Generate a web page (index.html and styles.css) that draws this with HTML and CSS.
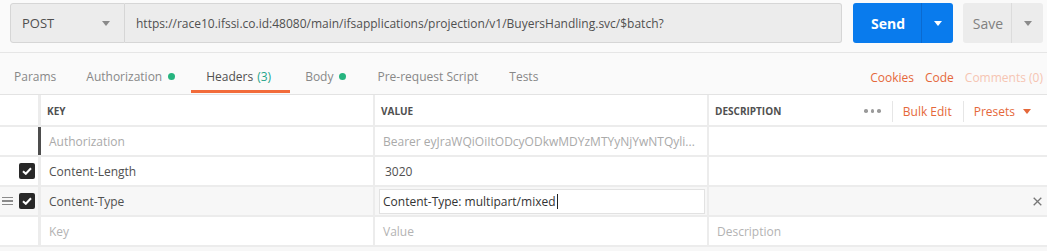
FILE: index.html
```html
<!DOCTYPE html>
<html>
<head>
<meta charset="utf-8">
<link rel="stylesheet" href="styles.css">
</head>
<body>
<div class="app">
  <div class="topbar">
    <div class="method"><span class="method-name">POST</span><span class="caret gray"></span></div>
    <div class="url">https://race10.ifssi.co.id:48080/main/ifsapplications/projection/v1/BuyersHandling.svc/$batch?</div>
    <div class="send"><span class="send-main">Send</span><span class="send-drop"><span class="caret white"></span></span></div>
    <div class="save"><span class="save-main">Save</span><span class="save-drop"><span class="caret gray"></span></span></div>
  </div>
  <div class="tabs">
    <div class="tab first">Params</div>
    <div class="tab">Authorization<span class="dot"></span></div>
    <div class="tab active">Headers <span class="count">(3)</span></div>
    <div class="tab">Body<span class="dot"></span></div>
    <div class="tab">Pre-request Script</div>
    <div class="tab">Tests</div>
    <div class="tab-links">
      <span class="link">Cookies</span>
      <span class="link">Code</span>
      <span class="link faded">Comments (0)</span>
    </div>
  </div>
  <div class="table">
    <div class="row head">
      <div class="cell check"></div>
      <div class="cell key">KEY</div>
      <div class="cell value">VALUE</div>
      <div class="cell desc">
        <span class="desc-title">DESCRIPTION</span>
        <span class="actions">
          <span class="more"><i></i><i></i><i></i></span>
          <span class="sep"></span>
          <span class="act">Bulk Edit</span>
          <span class="sep"></span>
          <span class="act">Presets</span><span class="caret orange"></span>
        </span>
      </div>
    </div>
    <div class="row">
      <div class="cell check disabled-mark"></div>
      <div class="cell key muted">Authorization</div>
      <div class="cell value muted">Bearer eyJraWQiOiItODcyODkwMDYzMTYyNjYwNTQyli...</div>
      <div class="cell desc"></div>
    </div>
    <div class="row">
      <div class="cell check"><span class="box"><svg width="10" height="8" viewBox="0 0 10 8"><path d="M1 4.2 L3.8 6.8 L9 1.2" fill="none" stroke="#fff" stroke-width="2"/></svg></span></div>
      <div class="cell key">Content-Length</div>
      <div class="cell value num">3020</div>
      <div class="cell desc"></div>
    </div>
    <div class="row hover">
      <div class="cell check"><span class="handle"><i></i><i></i><i></i></span><span class="box"><svg width="10" height="8" viewBox="0 0 10 8"><path d="M1 4.2 L3.8 6.8 L9 1.2" fill="none" stroke="#fff" stroke-width="2"/></svg></span></div>
      <div class="cell key">Content-Type</div>
      <div class="cell value editing"><span class="input">Content-Type: multipart/mixed<span class="cursor"></span></span></div>
      <div class="cell desc"><span class="close"><svg width="9" height="9" viewBox="0 0 9 9"><path d="M0.7 0.7 L8.3 8.3 M8.3 0.7 L0.7 8.3" stroke="#777" stroke-width="1.3"/></svg></span></div>
    </div>
    <div class="row">
      <div class="cell check"></div>
      <div class="cell key placeholder">Key</div>
      <div class="cell value placeholder">Value</div>
      <div class="cell desc placeholder">Description</div>
    </div>
  </div>
</div>
</body>
</html>
```

FILE: styles.css
```css
* { box-sizing: border-box; }
html, body { margin: 0; padding: 0; }
body {
  background: #f7f7f7;
  font-family: "Open Sans", "Liberation Sans", sans-serif;
  font-size: 12px;
  color: #505050;
  width: 1047px;
  height: 251px;
  overflow: hidden;
}
.app { width: 1047px; }

.topbar {
  height: 53px;
  background: #fafafa;
  border-bottom: 1px solid #e6e6e6;
  display: flex;
  align-items: flex-start;
  padding: 3px 4px 0 10px;
}
.method {
  width: 115px;
  height: 40px;
  background: #ececec;
  border: 1px solid #d6d6d6;
  border-radius: 3px 0 0 3px;
  display: flex;
  align-items: center;
  justify-content: space-between;
  padding: 0 14px 0 11px;
  font-size: 13px;
  color: #505050;
}
.url {
  width: 717px;
  height: 40px;
  background: #ececec;
  border: 1px solid #d6d6d6;
  border-left: none;
  border-radius: 0 3px 3px 0;
  display: flex;
  align-items: center;
  padding-left: 11px;
  font-size: 12px;
  color: #505050;
  white-space: nowrap;
}
.caret {
  display: inline-block;
  width: 0; height: 0;
  border-left: 4px solid transparent;
  border-right: 4px solid transparent;
  border-top: 5px solid #999;
}
.caret.white { border-top-color: #fff; }
.caret.gray { border-top-color: #8a8a8a; }
.caret.orange { border-top-color: #e5683a; margin-left: 8px; }
.send {
  margin-left: 11px;
  width: 100px;
  height: 40px;
  background: #097bed;
  border-radius: 3px;
  display: flex;
  color: #fff;
}
.send-main {
  width: 69px;
  display: flex;
  align-items: center;
  justify-content: center;
  font-weight: 700;
  font-size: 14px;
  padding-left: 2px;
  border-right: 1px solid #0a6ad0;
}
.send-drop {
  flex: 1;
  display: flex;
  align-items: center;
  justify-content: center;
}
.save {
  margin-left: 10px;
  width: 80px;
  height: 40px;
  background: #ececec;
  border-radius: 3px;
  display: flex;
  color: #808080;
}
.save-main {
  width: 49px;
  display: flex;
  align-items: center;
  justify-content: center;
  font-size: 14px;
  padding-left: 2px;
  border-right: 1px solid #dcdcdc;
}
.save-drop {
  flex: 1;
  display: flex;
  align-items: center;
  justify-content: center;
}

.tabs {
  height: 42px;
  background: #fafafa;
  border-bottom: 1px solid #e3e3e3;
  display: flex;
  align-items: stretch;
}
.tab {
  display: flex;
  align-items: center;
  padding: 10px 16px 0 15px;
  margin-bottom: 1px;
  border-bottom: 3px solid transparent;
  color: #888;
  white-space: nowrap;
}
.tab.first { padding-left: 14px; padding-right: 15px; }
.tab.active {
  color: #505050;
  border-bottom-color: #f26b3a;
  padding-right: 19px;
}
.count { color: #26a58a; margin-left: 4px; }
.dot {
  width: 7px; height: 7px;
  border-radius: 50%;
  background: #26b47f;
  margin-left: 6px;
}
.tab-links {
  margin-left: auto;
  display: flex;
  align-items: center;
  gap: 11px;
  padding: 7px 4px 0 0;
}
.link { color: #e5683a; }
.link.faded { color: #f6c5b2; }

.table { background: #fff; }
.row {
  display: flex;
  height: 30px;
  border-bottom: 2px solid #ececec;
}
.row.head { height: 32px; }
.row.hover { background: #f7f7f7; }
.cell {
  display: flex;
  align-items: center;
  border-right: 2px solid #ececec;
  white-space: nowrap;
  overflow: hidden;
}
.cell.check {
  width: 41px;
  border-right: 3px solid #ececec;
  justify-content: flex-end;
  padding-right: 3px;
}
.cell.check.disabled-mark { border-right-color: #4d4d4d; }
.cell.key { width: 334px; padding-left: 8px; color: #505050; }
.cell.value { width: 334px; padding-left: 8px; color: #505050; }
.cell.desc { flex: 1; border-right: none; padding-left: 8px; }
.row.head .cell { font-size: 10px; font-weight: 700; color: #505050; padding-top: 2px; }
.row.head .cell.key { padding-left: 6px; }
.row.head .cell.value { padding-left: 6px; }
.row.head .cell.desc { padding-left: 6px; justify-content: space-between; padding-right: 16px; }
.desc-title { font-size: 10px; font-weight: 700; }
.actions {
  display: flex;
  align-items: center;
  font-weight: 400;
}
.more { display: flex; gap: 3px; align-items: center; }
.more i {
  display: block;
  width: 3.5px; height: 3.5px;
  border-radius: 50%;
  background: #9a9a9a;
}
.sep {
  width: 1px;
  height: 21px;
  background: #e6e6e6;
  margin: 0 10px 0 11px;
}
.act { color: #e5683a; font-size: 12px; font-weight: 400; }
.muted { color: #aaa !important; }
.placeholder { color: #b3b3b3 !important; }
.cell.value.num { padding-left: 10px; }
.box {
  width: 16px; height: 16px;
  background: #282828;
  border-radius: 2px;
  display: flex;
  align-items: center;
  justify-content: center;
}
.handle {
  display: flex;
  flex-direction: column;
  gap: 2px;
  margin-right: 6px;
}
.handle i {
  display: block;
  width: 11px;
  height: 1.5px;
  background: #8a8a8a;
}
.cell.value.editing { padding-left: 4px; }
.input {
  width: 326px;
  height: 25px;
  background: #fff;
  border: 1px solid #e2e2e2;
  display: flex;
  align-items: center;
  padding-left: 3px;
  color: #333;
}
.cursor {
  display: inline-block;
  width: 1px;
  height: 15px;
  background: #222;
  margin-left: 1px;
}
.cell.desc .close { margin-left: auto; margin-right: 5px; display: flex; }
```
